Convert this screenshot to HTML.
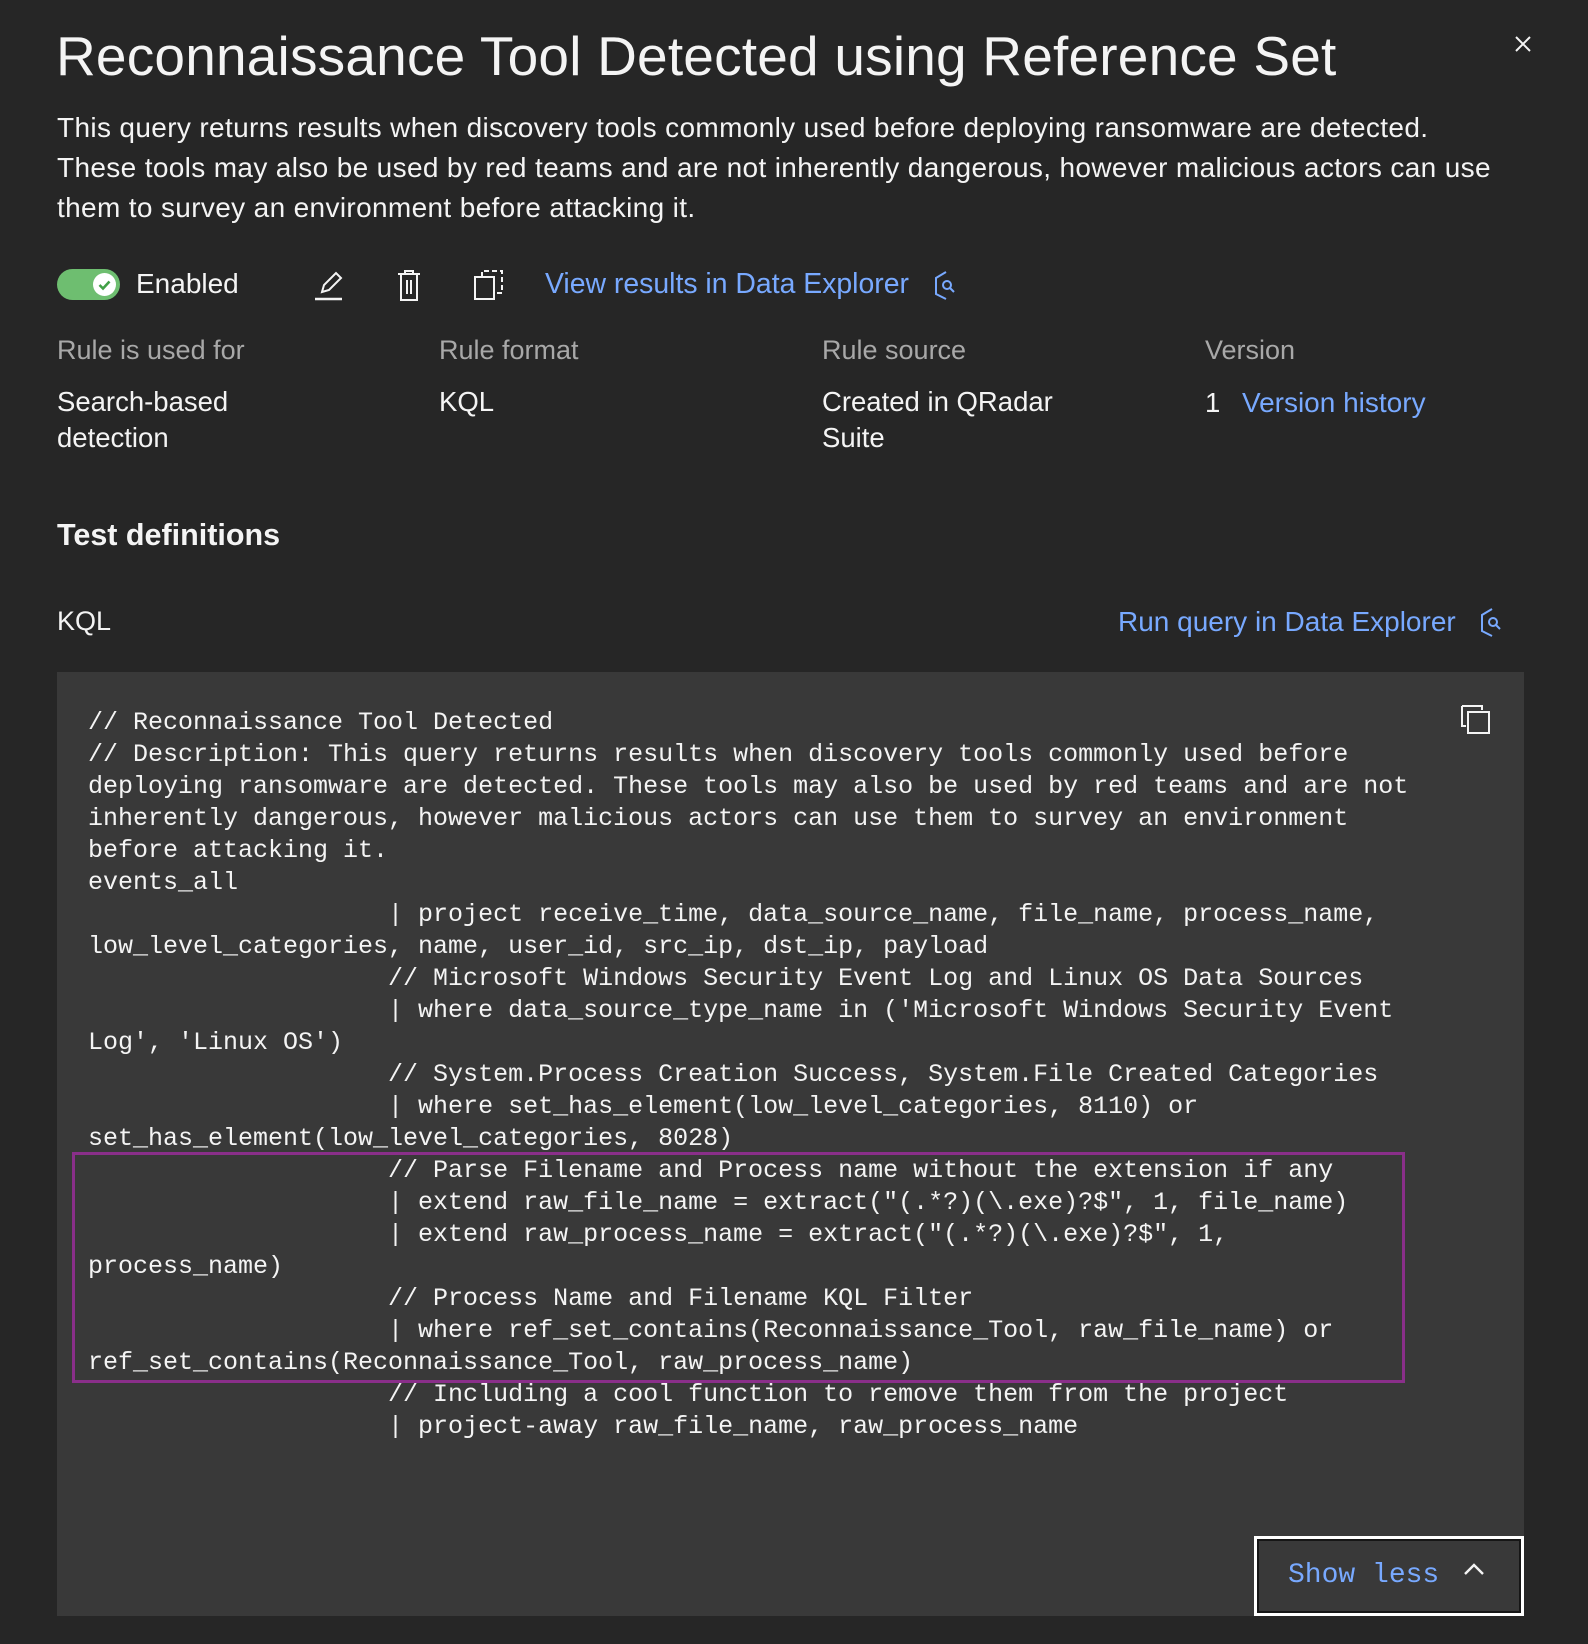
<!DOCTYPE html>
<html><head><meta charset="utf-8"><style>
*{margin:0;padding:0;box-sizing:border-box}
html,body{width:1588px;height:1644px;background:#262626;overflow:hidden}
body{font-family:"Liberation Sans",sans-serif;color:#f4f4f4;position:relative}
.abs{position:absolute}
h1{position:absolute;left:56px;top:24px;font-size:55px;font-weight:400;white-space:nowrap;letter-spacing:0.2px}
.desc{left:57px;top:108px;font-size:28px;line-height:40px;white-space:nowrap;letter-spacing:0.35px}
.lbl{font-size:27px;color:#a8a8a8}
.val{font-size:27.5px;line-height:36px;color:#f4f4f4}
.link{color:#78a9ff}
.panel{left:57px;top:672px;width:1467px;height:944px;background:#393939}
pre{position:absolute;left:88px;top:707px;font-family:"Liberation Mono",monospace;font-size:25px;line-height:32px;color:#f4f4f4}
</style></head><body>
<h1>Reconnaissance Tool Detected using Reference Set</h1>
<svg class="abs" style="left:1513px;top:34px" width="20" height="20" viewBox="0 0 20 20"><path d="M3 3L17 17M17 3L3 17" stroke="#f4f4f4" stroke-width="2"/></svg>
<div class="abs desc">This query returns results when discovery tools commonly used before deploying ransomware are detected.<br>These tools may also be used by red teams and are not inherently dangerous, however malicious actors can use<br>them to survey an environment before attacking it.</div>

<div class="abs" style="left:57px;top:269px;width:63px;height:31px;border-radius:16px;background:#6ebe70"></div>
<div class="abs" style="left:93px;top:273px;width:23px;height:23px;border-radius:50%;background:#fff"></div>
<svg class="abs" style="left:93px;top:273px" width="23" height="23" viewBox="0 0 23 23"><path d="M6.5 12l3.5 3.5 6.5-7" stroke="#42a047" stroke-width="2.6" fill="none"/></svg>
<div class="abs" style="left:136px;top:268px;font-size:28px">Enabled</div>
<svg class="abs" style="left:312px;top:268px" width="34" height="34" viewBox="0 0 34 34"><path d="M10 24l2-7L24 5l5 5-12 12z" stroke="#f4f4f4" stroke-width="2" fill="none"/><path d="M3 31h27" stroke="#f4f4f4" stroke-width="2.4"/></svg>
<svg class="abs" style="left:394px;top:268px" width="30" height="34" viewBox="0 0 30 34"><path d="M4 6h22M11 6V3h8v3M7 6v26h16V6M13 12v14M17 12v14" stroke="#f4f4f4" stroke-width="2" fill="none"/></svg>
<svg class="abs" style="left:472px;top:268px" width="34" height="34" viewBox="0 0 34 34"><rect x="3" y="9" width="19" height="22" stroke="#f4f4f4" stroke-width="2" fill="none"/><path d="M10 9V3h20v22h-8" stroke="#f4f4f4" stroke-width="2" stroke-dasharray="5 3" fill="none"/></svg>
<div class="abs link" style="left:545px;top:268px;font-size:28.4px">View results in Data Explorer</div>
<svg class="abs" style="left:932px;top:270px" width="28" height="30" viewBox="0 0 28 30"><path d="M14 2L4 8v16l10 5" stroke="#78a9ff" stroke-width="2" fill="none"/><circle cx="15" cy="15" r="4" stroke="#78a9ff" stroke-width="2" fill="none"/><path d="M18 18l4 4" stroke="#78a9ff" stroke-width="2"/></svg>

<div class="abs lbl" style="left:57px;top:335px">Rule is used for</div>
<div class="abs lbl" style="left:439px;top:335px">Rule format</div>
<div class="abs lbl" style="left:822px;top:335px">Rule source</div>
<div class="abs lbl" style="left:1205px;top:335px">Version</div>
<div class="abs val" style="left:57px;top:384px">Search-based<br>detection</div>
<div class="abs val" style="left:439px;top:384px">KQL</div>
<div class="abs val" style="left:822px;top:384px">Created in QRadar<br>Suite</div>
<div class="abs val" style="left:1205px;top:385px">1 <span class="link" style="margin-left:14px;font-size:28px">Version history</span></div>

<div class="abs" style="left:57px;top:518px;font-size:30.5px;font-weight:700">Test definitions</div>
<div class="abs" style="left:57px;top:606px;font-size:27px">KQL</div>
<div class="abs link" style="left:1118px;top:606px;font-size:28px">Run query in Data Explorer</div>
<svg class="abs" style="left:1478px;top:607px" width="28" height="30" viewBox="0 0 28 30"><path d="M14 2L4 8v16l10 5" stroke="#78a9ff" stroke-width="2" fill="none"/><circle cx="15" cy="15" r="4" stroke="#78a9ff" stroke-width="2" fill="none"/><path d="M18 18l4 4" stroke="#78a9ff" stroke-width="2"/></svg>

<div class="abs panel"></div>
<svg class="abs" style="left:1460px;top:704px" width="32" height="32" viewBox="0 0 32 32"><path d="M2 2h20v4" stroke="#f4f4f4" stroke-width="2" fill="none"/><path d="M2 2v20h4" stroke="#f4f4f4" stroke-width="2" fill="none"/><rect x="8" y="8" width="21" height="21" stroke="#f4f4f4" stroke-width="2" fill="none"/></svg>
<pre>// Reconnaissance Tool Detected
// Description: This query returns results when discovery tools commonly used before
deploying ransomware are detected. These tools may also be used by red teams and are not
inherently dangerous, however malicious actors can use them to survey an environment
before attacking it.
events_all
                    | project receive_time, data_source_name, file_name, process_name,
low_level_categories, name, user_id, src_ip, dst_ip, payload
                    // Microsoft Windows Security Event Log and Linux OS Data Sources
                    | where data_source_type_name in ('Microsoft Windows Security Event
Log', 'Linux OS')
                    // System.Process Creation Success, System.File Created Categories
                    | where set_has_element(low_level_categories, 8110) or
set_has_element(low_level_categories, 8028)
                    // Parse Filename and Process name without the extension if any
                    | extend raw_file_name = extract("(.*?)(\.exe)?$", 1, file_name)
                    | extend raw_process_name = extract("(.*?)(\.exe)?$", 1,
process_name)
                    // Process Name and Filename KQL Filter
                    | where ref_set_contains(Reconnaissance_Tool, raw_file_name) or
ref_set_contains(Reconnaissance_Tool, raw_process_name)
                    // Including a cool function to remove them from the project
                    | project-away raw_file_name, raw_process_name</pre>
<div class="abs" style="left:72px;top:1152px;width:1333px;height:231px;border:3px solid #8a2f8a"></div>

<div class="abs" style="left:1254px;top:1536px;width:270px;height:80px;border:4px solid #fff;background:#161616"></div>
<div class="abs" style="left:1258px;top:1540px;width:262px;height:72px;border:1px solid #161616;background:#393939;outline:1px solid #161616"></div>
<div class="abs link" style="left:1288px;top:1560px;font-family:'Liberation Mono',monospace;font-size:28px">Show less</div>
<svg class="abs" style="left:1462px;top:1562px" width="24" height="16" viewBox="0 0 24 16"><path d="M3 12l9-9 9 9" stroke="#f4f4f4" stroke-width="2.4" fill="none"/></svg>
</body></html>
